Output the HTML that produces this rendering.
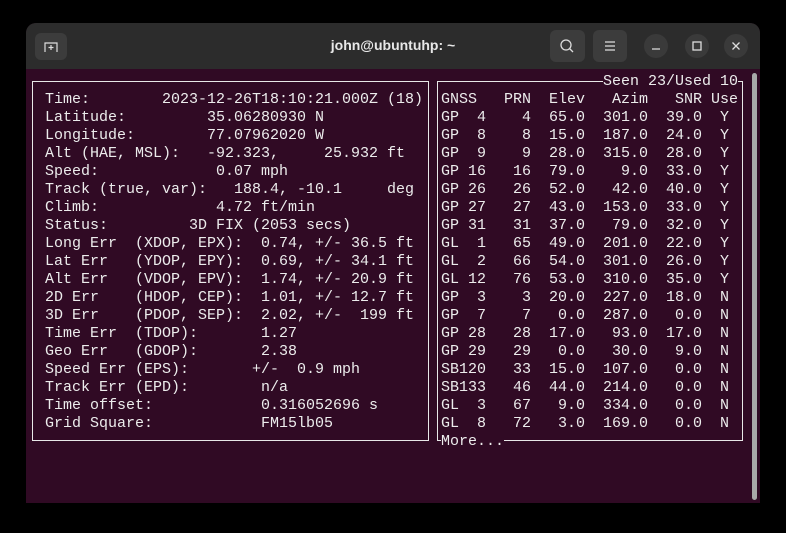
<!DOCTYPE html>
<html><head><meta charset="utf-8"><style>
html,body{margin:0;padding:0;background:#000;width:786px;height:533px;overflow:hidden}
.win{position:absolute;left:26px;top:23px;width:734px;height:480px;background:#300a24;border-radius:10px 10px 0 0;overflow:hidden}
.bar{position:absolute;left:0;top:0;width:734px;height:46px;background:#2c2c2c}
.title{position:absolute;left:0;width:734px;top:14px;text-align:center;color:#e8e8e8;font:bold 14px "Liberation Sans",sans-serif}
.btn{position:absolute;background:#3c3c3c;border-radius:6px}
.circ{position:absolute;width:24px;height:24px;border-radius:12px;background:#3a3a3a}
pre{position:absolute;margin:0;font:15px/18px "Liberation Mono",monospace;color:#ececec}
.box{position:absolute;border:1px solid #e8e8e8}
.lbl{position:absolute;background:#300a24;font:15px/18px "Liberation Mono",monospace;color:#ececec;white-space:pre}
.sb{position:absolute;left:752px;top:73px;width:5px;height:427px;background:#a8a8a8;border-radius:3px}
</style></head><body>
<div class="win">
<div class="bar">
<div class="btn" style="left:9px;top:10px;width:32px;height:27px"></div>
<svg style="position:absolute;left:17px;top:16px" width="16" height="16" viewBox="0 0 16 16"><path d="M2 13V4h12v9" fill="none" stroke="#ddd" stroke-width="1.2"/><path d="M8 6v5M5.5 8.5h5" stroke="#ddd" stroke-width="1.2"/></svg>
<div class="title">john@ubuntuhp: ~</div>
<div class="btn" style="left:524px;top:7px;width:35px;height:32px"></div>
<svg style="position:absolute;left:533px;top:15px" width="16" height="16" viewBox="0 0 16 16"><circle cx="7" cy="7" r="5" fill="none" stroke="#ddd" stroke-width="1.3"/><path d="M10.5 10.5L14 14" stroke="#ddd" stroke-width="1.3"/></svg>
<div class="btn" style="left:567px;top:7px;width:34px;height:32px"></div>
<svg style="position:absolute;left:576px;top:15px" width="16" height="16" viewBox="0 0 16 16"><path d="M3 4h10M3 8h10M3 12h10" stroke="#ddd" stroke-width="1.3"/></svg>
<div class="circ" style="left:618px;top:11px"></div>
<svg style="position:absolute;left:624px;top:17px" width="12" height="12"><path d="M2 9h8" stroke="#ddd" stroke-width="1.3"/></svg>
<div class="circ" style="left:659px;top:11px"></div>
<svg style="position:absolute;left:665px;top:17px" width="12" height="12"><rect x="2" y="2" width="8" height="8" fill="none" stroke="#ddd" stroke-width="1.3"/></svg>
<div class="circ" style="left:698px;top:11px"></div>
<svg style="position:absolute;left:704px;top:17px" width="12" height="12"><path d="M2.5 2.5l7 7M9.5 2.5l-7 7" stroke="#ddd" stroke-width="1.3"/></svg>
</div>
</div>
<div class="sb"></div>
<div class="box" style="left:32px;top:81px;width:395px;height:358px"></div>
<div class="box" style="left:437px;top:81px;width:304px;height:358px"></div>
<div class="lbl" style="left:603px;top:73px">Seen 23/Used 10</div>
<div class="lbl" style="left:441px;top:433px">More...</div>
<pre style="left:45px;top:91px">Time:        2023-12-26T18:10:21.000Z (18)
Latitude:         35.06280930 N
Longitude:        77.07962020 W
Alt (HAE, MSL):   -92.323,     25.932 ft
Speed:             0.07 mph
Track (true, var):   188.4, -10.1     deg
Climb:             4.72 ft/min
Status:         3D FIX (2053 secs)
Long Err  (XDOP, EPX):  0.74, +/- 36.5 ft
Lat Err   (YDOP, EPY):  0.69, +/- 34.1 ft
Alt Err   (VDOP, EPV):  1.74, +/- 20.9 ft
2D Err    (HDOP, CEP):  1.01, +/- 12.7 ft
3D Err    (PDOP, SEP):  2.02, +/-  199 ft
Time Err  (TDOP):       1.27
Geo Err   (GDOP):       2.38
Speed Err (EPS):       +/-  0.9 mph
Track Err (EPD):        n/a
Time offset:            0.316052696 s
Grid Square:            FM15lb05</pre>
<pre style="left:441px;top:91px">GNSS   PRN  Elev   Azim   SNR Use
GP  4    4  65.0  301.0  39.0  Y
GP  8    8  15.0  187.0  24.0  Y
GP  9    9  28.0  315.0  28.0  Y
GP 16   16  79.0    9.0  33.0  Y
GP 26   26  52.0   42.0  40.0  Y
GP 27   27  43.0  153.0  33.0  Y
GP 31   31  37.0   79.0  32.0  Y
GL  1   65  49.0  201.0  22.0  Y
GL  2   66  54.0  301.0  26.0  Y
GL 12   76  53.0  310.0  35.0  Y
GP  3    3  20.0  227.0  18.0  N
GP  7    7   0.0  287.0   0.0  N
GP 28   28  17.0   93.0  17.0  N
GP 29   29   0.0   30.0   9.0  N
SB120   33  15.0  107.0   0.0  N
SB133   46  44.0  214.0   0.0  N
GL  3   67   9.0  334.0   0.0  N
GL  8   72   3.0  169.0   0.0  N</pre>
</body></html>
